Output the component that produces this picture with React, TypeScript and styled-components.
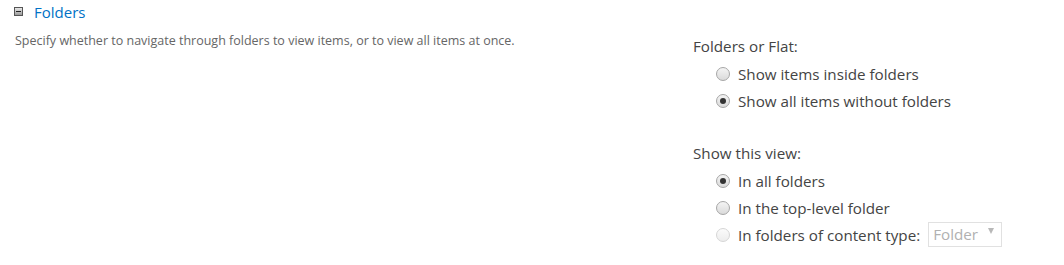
import { createGlobalStyle, styled } from "styled-components";

const GlobalStyle = createGlobalStyle`
  html, body {
    margin: 0;
    padding: 0;
    background: #fff;
  }
  body {
    font-family: "Open Sans", "Noto Sans", sans-serif;
  }
`;

const Section = styled.div`
  display: flex;
  padding: 0 0 0 14px;
  width: 1064px;
  box-sizing: border-box;
`;

const LeftColumn = styled.div`
  width: 679px;
  flex-shrink: 0;
`;

const Heading = styled.div`
  display: flex;
  align-items: center;
  gap: 11px;
  height: 23px;
`;

const Toggle = styled.span`
  width: 9px;
  height: 9px;
  box-sizing: border-box;
  border: 1px solid #555;
  background: linear-gradient(#e8e8e8, #9a9a9a);
  display: flex;
  align-items: center;
  justify-content: center;
  &::after {
    content: "";
    width: 5px;
    height: 1px;
    background: #222;
  }
`;

const Title = styled.span`
  font-size: 15px;
  color: #0072c6;
`;

const Description = styled.p`
  margin: 9px 0 0 1px;
  font-size: 12.5px;
  color: #666;
`;

const RightColumn = styled.div`
  padding-top: 36px;
  display: flex;
  flex-direction: column;
  gap: 29px;
`;

const Group = styled.div`
  display: flex;
  flex-direction: column;
`;

const Label = styled.div<{ $space: number }>`
  font-size: 15.2px;
  color: #444;
  height: 20px;
  line-height: 20px;
  margin-bottom: ${(p) => p.$space}px;
`;

const Option = styled.label`
  display: flex;
  align-items: center;
  height: 27px;
  padding-left: 23px;
  gap: 8px;
  font-size: 15.2px;
  color: #444;
`;

const Radio = styled.span<{ $checked?: boolean; $disabled?: boolean }>`
  width: 14px;
  height: 14px;
  box-sizing: border-box;
  border-radius: 50%;
  border: 1px solid ${(p) => (p.$disabled ? "#d6d6d6" : "#a6a6a6")};
  background: ${(p) =>
    p.$disabled
      ? "linear-gradient(#fbfbfb, #ededed)"
      : "linear-gradient(#f4f4f4, #dadada)"};
  display: flex;
  align-items: center;
  justify-content: center;
  flex-shrink: 0;
  &::after {
    content: "";
    display: ${(p) => (p.$checked ? "block" : "none")};
    width: 6px;
    height: 6px;
    border-radius: 50%;
    background: #333;
  }
`;

const Select = styled.span`
  display: inline-flex;
  align-items: center;
  justify-content: space-between;
  width: 74px;
  height: 25px;
  box-sizing: border-box;
  border: 1px solid #e1e1e1;
  padding: 0 7px 2px 4px;
  color: #b1b1b1;
  font-size: 15.2px;
`;

const Caret = styled.span`
  width: 0;
  height: 0;
  border-left: 3.5px solid transparent;
  border-right: 3.5px solid transparent;
  border-top: 6px solid #b8b8b8;
  margin-top: -6px;
`;

const folderOptions = [
  { text: "Show items inside folders", checked: false },
  { text: "Show all items without folders", checked: true },
];

const viewOptions = [
  { text: "In all folders", checked: true },
  { text: "In the top-level folder", checked: false },
];

export default function App() {
  return (
    <>
      <GlobalStyle />
      <Section>
        <LeftColumn>
          <Heading>
            <Toggle />
            <Title>Folders</Title>
          </Heading>
          <Description>
            Specify whether to navigate through folders to view items, or to
            view all items at once.
          </Description>
        </LeftColumn>
        <RightColumn>
          <Group>
            <Label $space={4}>Folders or Flat:</Label>
            {folderOptions.map((o) => (
              <Option key={o.text}>
                <Radio $checked={o.checked} />
                {o.text}
              </Option>
            ))}
          </Group>
          <Group>
            <Label $space={4}>Show this view:</Label>
            {viewOptions.map((o) => (
              <Option key={o.text}>
                <Radio $checked={o.checked} />
                {o.text}
              </Option>
            ))}
            <Option>
              <Radio $disabled />
              In folders of content type:
              <Select>
                Folder
                <Caret />
              </Select>
            </Option>
          </Group>
        </RightColumn>
      </Section>
    </>
  );
}
